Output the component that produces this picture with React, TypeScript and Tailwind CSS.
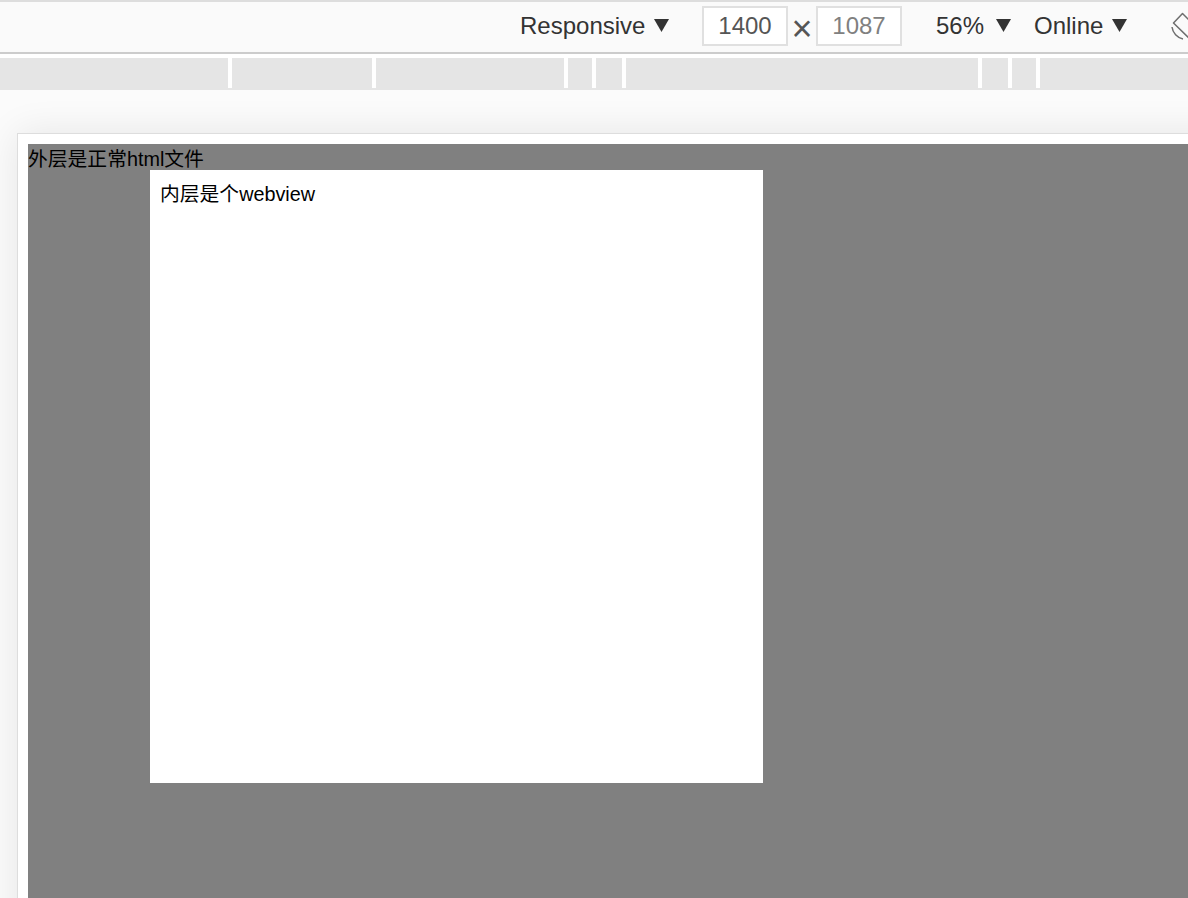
const segments = [228, 140, 188, 24, 26, 352, 26, 24, 148];

function Caret({ className }: { className: string }) {
  return (
    <svg width="15" height="13" viewBox="0 0 15 13" className={className}>
      <polygon points="0,0 15,0 7.5,13" fill="#333333" />
    </svg>
  );
}

function RotateIcon() {
  return (
    <svg width="32" height="32" viewBox="0 0 32 32" fill="none" stroke="#6e6e6e" strokeWidth="1.5" className="ml-[43px] shrink-0">
      <path d="M3.5 13 L12.5 3.5 L30 21 L21 30 Z" strokeLinejoin="round" />
      <path d="M2 17 A14 14 0 0 0 13 29" />
    </svg>
  );
}

export default function App() {
  return (
    <div className="h-[898px] w-[1188px] overflow-hidden bg-white font-['Liberation_Sans','Noto_Sans_CJK_SC',sans-serif] text-black">
      <div className="flex h-[54px] items-center overflow-hidden border-t-2 border-b-2 border-t-[#dddddd] border-b-[#cccccc] bg-[#fafafa] pb-[2px] pl-[520px] text-[24px] text-[#333333]">
        <span className="w-[124px] shrink-0">Responsive</span>
        <Caret className="ml-[10px] shrink-0 -translate-y-px" />
        <div className="ml-[33px] flex h-[40px] w-[86px] shrink-0 items-center justify-center border-2 border-[#e0e0e0] bg-white text-[#555555]">1400</div>
        <span className="flex w-[28px] shrink-0 translate-y-[3px] justify-center text-[36px] leading-none text-[#555555]">×</span>
        <div className="flex h-[40px] w-[86px] shrink-0 items-center justify-center border-2 border-[#e0e0e0] bg-white text-[#808080]">1087</div>
        <span className="ml-[34px] w-[50px] shrink-0">56%</span>
        <Caret className="ml-[10px] shrink-0 -translate-y-px" />
        <span className="ml-[23px] w-[69px] shrink-0">Online</span>
        <Caret className="ml-[9px] shrink-0 -translate-y-px" />
        <RotateIcon />
      </div>
      <div className="flex h-[36px] gap-[4px] border-b-[2px] border-b-[#e5e5e5] pt-[4px]">
        {segments.map((w, i) => (
          <div key={i} className="h-full shrink-0 bg-[#e5e5e5]" style={{ width: w }} />
        ))}
      </div>
      <div className="h-[808px] overflow-hidden bg-[#fbfbfb] pl-[17px] pt-[43px]">
        <div className="h-[900px] w-[1300px] border border-[#dddddd] bg-white p-[10px] shadow-[0_0_36px_rgba(0,0,0,0.09)]">
          <div className="h-full bg-[#808080]">
            <div className="h-[26px] pt-[2px] text-[19.8px] leading-[26px]">外层是正常html文件</div>
            <div className="ml-[122px] h-[613px] w-[613px] bg-white pl-[10px] pt-[11px] text-[19.8px] leading-[26px]">内层是个webview</div>
          </div>
        </div>
      </div>
    </div>
  );
}
